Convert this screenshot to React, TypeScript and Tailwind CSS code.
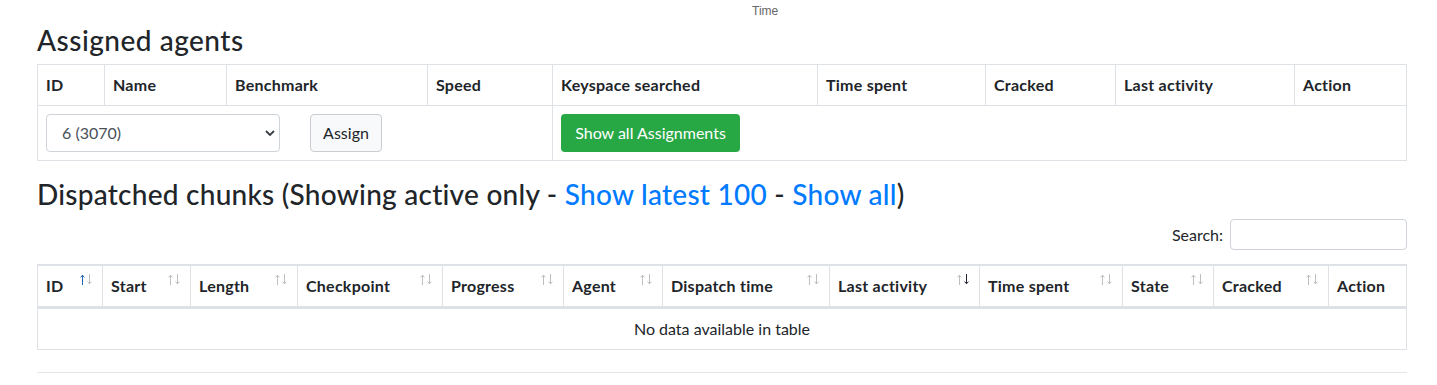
import React from "react";

function SortIcon({ active }: { active?: "up" | "down" }) {
  const grey = "#bcbec0";
  const upColor = active === "up" ? "#1f64ad" : grey;
  const downColor = active === "down" ? "#262336" : grey;
  return (
    <svg
      width="12"
      height="11"
      viewBox="0 0 12 11"
      fill="none"
      strokeWidth="1"
      className="absolute right-[10px] top-[8px]"
    >
      <path d="M2.5 1.2V11M0.6 3.4L2.5 1.2L4.4 3.4" stroke={upColor} />
      <path d="M9.5 0V9.8M7.6 7.6L9.5 9.8L11.4 7.6" stroke={downColor} />
    </svg>
  );
}

const t1Headers = [
  "ID",
  "Name",
  "Benchmark",
  "Speed",
  "Keyspace searched",
  "Time spent",
  "Cracked",
  "Last activity",
  "Action",
];

const t2Headers: { label: string; sort?: boolean; active?: "up" | "down" }[] = [
  { label: "ID", sort: true, active: "up" },
  { label: "Start", sort: true },
  { label: "Length", sort: true },
  { label: "Checkpoint", sort: true },
  { label: "Progress", sort: true },
  { label: "Agent", sort: true },
  { label: "Dispatch time", sort: true },
  { label: "Last activity", sort: true, active: "down" },
  { label: "Time spent", sort: true },
  { label: "State", sort: true },
  { label: "Cracked", sort: true },
  { label: "Action" },
];

export default function App() {
  return (
    <div className="min-h-[385px] bg-white text-[#212529] font-['Lato',sans-serif] pt-[4px]">
      <div className="ml-[752px] text-[12px] leading-[14px] h-[14px] text-[#666666] font-['Liberation_Sans',Arial,sans-serif]">
        Time
      </div>
      <div className="ml-[37px] w-[1370px]">
        <h3 className="mt-[5px] mb-[7px] text-[28px] leading-[34px] font-medium tracking-[0.5px]">
          Assigned agents
        </h3>

        <div className="grid grid-cols-[67px_122px_201px_125px_265px_168px_130px_179px_112px] border-l border-t border-[#dee2e6] text-[16px]">
          {t1Headers.map((h) => (
            <div
              key={h}
              className="px-[8px] py-[8px] leading-6 font-bold tracking-[0.25px] border-r border-b border-[#dee2e6]"
            >
              {h}
            </div>
          ))}
          <div className="col-span-4 p-[8px] border-r border-b border-[#dee2e6] flex items-center">
            <div className="relative w-[234px] h-[38px]">
              <select
                defaultValue="6"
                className="appearance-none w-full h-full rounded-[4px] border border-[#ced4da] bg-white pl-[15px] pr-[28px] text-[16px] leading-6 text-[#495057] outline-none"
              >
                <option value="6">6 (3070)</option>
              </select>
              <svg
                width="10"
                height="6"
                viewBox="0 0 10 6"
                fill="none"
                className="pointer-events-none absolute right-[5px] top-[16px]"
              >
                <path d="M1 1L5 5L9 1" stroke="#3a3f44" strokeWidth="1.8" />
              </svg>
            </div>
            <button className="ml-[30px] h-[38px] w-[72px] rounded-[4px] border border-[#c9ccd0] bg-[#f8f9fa] text-[16px] leading-6 text-[#212529]">
              Assign
            </button>
          </div>
          <div className="col-span-5 p-[8px] border-r border-b border-[#dee2e6] flex items-center">
            <button className="h-[38px] w-[179px] rounded-[4px] bg-[#28a745] text-white text-[16px] leading-6">
              Show all Assignments
            </button>
          </div>
        </div>

        <h3 className="mt-[16px] mb-[8px] text-[28px] leading-[34px] font-medium tracking-[0.25px]">
          Dispatched chunks (Showing active only -{" "}
          <a className="text-[#007bff]">Show latest 100</a> -{" "}
          <a className="text-[#007bff]">Show all</a>)
        </h3>

        <div className="flex items-center justify-end">
          <label className="text-[16px] leading-6 mr-[7px]">Search:</label>
          <input
            type="search"
            className="h-[31px] w-[177px] rounded-[4px] border border-[#ced4da] bg-white px-[8px] text-[14px] outline-none"
          />
        </div>

        <div className="mt-[14px] grid grid-cols-[65px_88px_107px_145px_121px_99px_167px_150px_143px_91px_115px_78px] border-l border-t-2 border-[#dee2e6] text-[16px]">
          {t2Headers.map((h) => (
            <div
              key={h.label}
              className="relative px-[8px] py-[8px] leading-6 font-bold tracking-[0.25px] border-r border-b-2 border-[#dee2e6]"
            >
              {h.label}
              {h.sort && <SortIcon active={h.active} />}
            </div>
          ))}
          <div className="col-span-12 px-[8px] py-[8px] leading-6 text-center border-t border-r border-b border-[#dee2e6]">
            No data available in table
          </div>
        </div>

        <hr className="mt-[22px] border-0 border-t border-[#e5e5e5]" />
      </div>
    </div>
  );
}
